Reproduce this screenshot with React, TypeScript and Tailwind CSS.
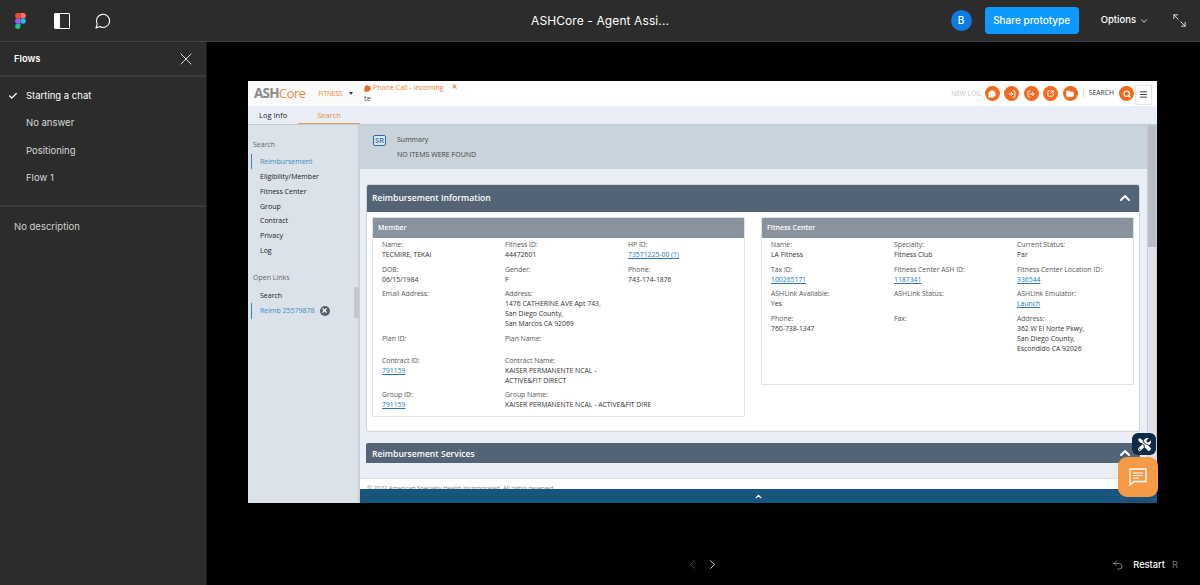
import { X, Check, ChevronDown, ChevronUp, ChevronLeft, ChevronRight, Search, Menu, Undo2, MessageCircle, LogIn, LogOut, SquareArrowOutUpRight, Folder, Maximize2 } from 'lucide-react';
import { FaTools } from 'react-icons/fa';

const flows = ['Starting a chat', 'No answer', 'Positioning', 'Flow 1'];
const searchLinks = ['Eligibility/Member', 'Fitness Center', 'Group', 'Contract', 'Privacy', 'Log'];

type Field = { label: string; lines?: string[]; link?: string };

const memberRows: Field[][] = [
  [
    { label: 'Name:', lines: ['TECMIRE, TEKAI'] },
    { label: 'Fitness ID:', lines: ['44472601'] },
    { label: 'HP ID:', link: '73571225-00 (1)' },
  ],
  [
    { label: 'DOB:', lines: ['06/15/1984'] },
    { label: 'Gender:', lines: ['F'] },
    { label: 'Phone:', lines: ['743-174-1876'] },
  ],
  [
    { label: 'Email Address:' },
    { label: 'Address:', lines: ['1476 CATHERINE AVE Apt 743,', 'San Diego County,', 'San Marcos CA 92069'] },
    { label: '' },
  ],
  [{ label: 'Plan ID:' }, { label: 'Plan Name:' }, { label: '' }],
  [
    { label: 'Contract ID:', link: '791159' },
    { label: 'Contract Name:', lines: ['KAISER PERMANENTE NCAL -', 'ACTIVE&FIT DIRECT'] },
    { label: '' },
  ],
  [
    { label: 'Group ID:', link: '791159' },
    { label: 'Group Name:', lines: ['KAISER PERMANENTE NCAL - ACTIVE&FIT DIRE'] },
    { label: '' },
  ],
];

const centerRows: Field[][] = [
  [
    { label: 'Name:', lines: ['LA Fitness'] },
    { label: 'Specialty:', lines: ['Fitness Club'] },
    { label: 'Current Status:', lines: ['Par'] },
  ],
  [
    { label: 'Tax ID:', link: '100265171' },
    { label: 'Fitness Center ASH ID:', link: '1187341' },
    { label: 'Fitness Center Location ID:', link: '336544' },
  ],
  [
    { label: 'ASHLink Available:', lines: ['Yes'] },
    { label: 'ASHLink Status:' },
    { label: 'ASHLink Emulator:', link: 'Launch' },
  ],
  [
    { label: 'Phone:', lines: ['760-738-1347'] },
    { label: 'Fax:' },
    { label: 'Address:', lines: ['362 W El Norte Pkwy,', 'San Diego County,', 'Escondido CA 92026'] },
  ],
];

function FigmaLogo() {
  return (
    <svg width="11" height="16" viewBox="0 0 38 57" className="shrink-0">
      <path d="M19 28.5a9.5 9.5 0 1 1 19 0 9.5 9.5 0 0 1-19 0z" fill="#1abcfe" />
      <path d="M0 47.5A9.5 9.5 0 0 1 9.5 38H19v9.5a9.5 9.5 0 1 1-19 0z" fill="#0acf83" />
      <path d="M19 0v19h9.5a9.5 9.5 0 1 0 0-19H19z" fill="#ff7262" />
      <path d="M0 9.5A9.5 9.5 0 0 0 9.5 19H19V0H9.5A9.5 9.5 0 0 0 0 9.5z" fill="#f24e1e" />
      <path d="M0 28.5A9.5 9.5 0 0 0 9.5 38H19V19H9.5A9.5 9.5 0 0 0 0 28.5z" fill="#a259ff" />
    </svg>
  );
}

function RoundAction({ children }: { children: React.ReactNode }) {
  return (
    <span className="w-[15px] h-[15px] rounded-full bg-[#f26a1e] flex items-center justify-center text-white shrink-0">
      {children}
    </span>
  );
}

function InfoGrid({ rows, tightRow }: { rows: Field[][]; tightRow?: number }) {
  return (
    <div className="pl-[9px] pt-[2px] text-[6.85px]">
      {rows.map((row, i) => (
        <div key={i} className={`grid grid-cols-[123px_123px_1fr] ${i === tightRow ? 'mb-[2px]' : 'mb-[4.6px]'}`}>
          {row.map((f, j) => (
            <div key={j} className="min-h-5 leading-[10px]">
              <div className="text-[#555]">{f.label || '\u00a0'}</div>
              {f.link && <div className="text-[#2a7ab8] underline">{f.link}</div>}
              {f.lines?.map((l) => <div key={l} className="text-[#333] whitespace-nowrap">{l}</div>)}
            </div>
          ))}
        </div>
      ))}
    </div>
  );
}

function SubPanel({ title, rows, className, tightRow }: { title: string; rows: Field[][]; className: string; tightRow?: number }) {
  return (
    <div className={`w-[373px] bg-white border border-[#dfe3e8] rounded-[1px] ${className}`}>
      <div className="h-5 bg-[#8a929e] text-white font-semibold text-[7px] leading-5 px-[5px]">{title}</div>
      <InfoGrid rows={rows} tightRow={tightRow} />
    </div>
  );
}

export default function App() {
  return (
    <div className="w-[1200px] h-[585px] bg-black overflow-hidden flex flex-col font-['Inter',sans-serif] text-white">
      <header className="h-[42px] shrink-0 bg-[#2c2c2c] border-b border-[#444] flex items-center relative">
        <div className="pl-[15px] flex items-center">
          <FigmaLogo />
          <span className="ml-[28px] w-4 h-4 border-[1.5px] border-white rounded-[1px] flex">
            <span className="w-[5px] bg-white" />
          </span>
          <svg width="16" height="16" viewBox="0 0 16 16" fill="none" stroke="white" strokeWidth="1.1" className="ml-[25px]">
            <path d="M1 15l1.2-4.1A6.6 6.6 0 1 1 4.8 13.6L1 15z" strokeLinejoin="round" />
          </svg>
        </div>
        <div className="absolute left-0 right-0 text-center text-[12px] tracking-[0.1px]">ASHCore - Agent Assi...</div>
        <div className="ml-auto flex items-center">
          <span className="w-[21px] h-[21px] rounded-full bg-[#0c7ce0] text-[10px] font-medium flex items-center justify-center">B</span>
          <button className="ml-[13px] w-[94px] h-[27px] rounded-[4px] bg-[#0d99ff] text-[10px] font-medium">Share prototype</button>
          <span className="ml-[22px] text-[9.5px] font-medium">Options</span>
          <ChevronDown size={10} className="ml-[3px]" />
          <Maximize2 size={15} strokeWidth={1.3} className="ml-[23px] mr-[13px] -scale-x-100" />
        </div>
      </header>

      <div className="flex-1 flex min-h-0">
        <aside className="w-[207px] shrink-0 bg-[#2c2c2c] border-r border-[#1a1a1a]">
          <div className="h-[35px] border-b-2 border-[#3b3b3b] flex items-center justify-between pl-[14px] pr-[10px]">
            <span className="text-[9.3px] font-semibold">Flows</span>
            <X size={20} strokeWidth={1} />
          </div>
          <div className="pt-[5px] pb-[13px] border-b-2 border-[#3b3b3b]">
            {flows.map((f, i) => (
              <div key={f} className={`h-[27.5px] flex items-center pl-[26px] text-[9.5px] relative ${i === 0 ? 'text-white' : 'text-[#d8d8d8]'}`}>
                {i === 0 && <Check size={10} strokeWidth={3} className="absolute left-[8px]" />}
                {f}
              </div>
            ))}
          </div>
          <div className="pl-[14px] pt-[13px] text-[9.5px] text-[#cfcfcf]">No description</div>
        </aside>

        <main className="flex-1 flex flex-col min-w-0 pt-[39px] pl-[41px]">
          <div className="w-[909px] h-[422px] shrink-0 relative">
            <div className="w-full h-full overflow-hidden flex flex-col bg-[#eaeef6] font-['Open_Sans',sans-serif] text-[7px] text-[#333]">
              <div className="h-[25px] shrink-0 bg-white flex">
                <div className="w-[114px] flex items-center pl-[6px] bg-[#fafafa]">
                  <span className="text-[13.5px] font-bold text-[#8b8b8b] tracking-[-0.8px] leading-none">ASH</span>
                  <span className="text-[13.5px] text-[#ee8d44] tracking-[-0.8px] leading-none">Core</span>
                  <span className="ml-[13px] text-[6.5px] text-[#ee7d2c]">FITNESS</span>
                  <span className="ml-[6px] border-x-[2.5px] border-x-transparent border-t-[3px] border-t-[#444]" />
                </div>
                <div className="w-[98px] pl-[2px] pt-[2px] relative leading-[10px]">
                  <div className="flex items-center text-[#ee7d2c] text-[7px]">
                    <MessageCircle size={7} fill="#ee6a1e" stroke="#ee6a1e" className="mr-[2px]" />
                    Phone Call - Incoming
                  </div>
                  <div className="text-[#444] text-[7.5px]">te</div>
                  <X size={7} strokeWidth={3.5} className="absolute right-[2px] top-[2px] text-[#ee6a1e]" />
                </div>
                <div className="flex-1 flex items-center justify-end pr-[5px]">
                  <span className="text-[#c4c4c4] text-[6.5px] mr-[4px]">NEW LOG</span>
                  <div className="flex items-center gap-[4.5px]">
                    <RoundAction><MessageCircle size={8} fill="white" /></RoundAction>
                    <RoundAction><LogIn size={8} strokeWidth={3} /></RoundAction>
                    <RoundAction><LogOut size={8} strokeWidth={3} /></RoundAction>
                    <RoundAction><SquareArrowOutUpRight size={7} strokeWidth={3} /></RoundAction>
                    <RoundAction><Folder size={8} fill="white" /></RoundAction>
                  </div>
                  <span className="w-px h-[9px] bg-[#ddd] mx-[5px]" />
                  <span className="text-[#333] text-[6.8px] mr-[5px]">SEARCH</span>
                  <RoundAction><Search size={8} strokeWidth={3.5} /></RoundAction>
                  <span className="ml-[1px] w-[17px] h-[20px] mt-[2px] bg-white border border-[#e4e4e4] flex items-center justify-center">
                    <Menu size={9} strokeWidth={2.5} className="text-[#333]" />
                  </span>
                </div>
              </div>

              <div className="h-[18px] shrink-0 flex bg-[#eaeef6] text-[7.5px]">
                <div className="w-[50px] pl-[11px] pt-[2px] leading-[15px] text-[#222]">Log Info</div>
                <div className="w-[62px] pt-[2px] text-center leading-[15px] text-[#ee8d44] border-b-[1.5px] border-[#ee9a5c]">Search</div>
              </div>

              <div className="flex-1 flex min-h-0 border-t border-[#c3ccd4]">
                <nav className="w-[112px] shrink-0 bg-[#dbe2e9] border-r-2 border-[#c8d0d8] relative pt-[15px]">
                  <div className="pl-[5px] text-[#666] leading-[10px]">Search</div>
                  <div className="mt-[4px] ml-[3px] pl-[8px] border-l-[1.5px] border-[#3b82b5] leading-[15px] text-[#3f8bc2]">Reimbursement</div>
                  <div className="pl-[12px] pt-[1px]">
                    {searchLinks.map((s) => (
                      <div key={s} className="leading-[14.8px] text-[#222]">{s}</div>
                    ))}
                  </div>
                  <div className="pl-[5px] mt-[14px] text-[#666] leading-[10px]">Open Links</div>
                  <div className="pl-[12px] mt-[6px] leading-[14px] text-[#222]">Search</div>
                  <div className="ml-[3px] pl-[8px] border-l-[1.5px] border-[#3b82b5] leading-[16px] text-[#3f8bc2] flex items-center">
                    Reimb 25579878
                    <span className="ml-[5px] w-[10px] h-[10px] rounded-full bg-[#55606b] flex items-center justify-center text-white">
                      <X size={7} strokeWidth={4} />
                    </span>
                  </div>
                  <span className="absolute -right-[1px] top-[162px] w-[5px] h-[31px] rounded-[2px] bg-[#c0c7ce]" />
                </nav>

                <div className="flex-1 flex min-w-0 overflow-hidden">
                  <div className="flex-1 min-w-0 flex flex-col">
                    <div className="h-[44px] shrink-0 bg-[#c9d3db] flex pl-[13px] pt-[9px]">
                      <span className="mt-[1px] w-[13px] h-[11px] border border-[#2a6c9c] rounded-[2px] bg-[#dbe7f0] text-[#2a6c9c] text-[7.5px] leading-[9px] font-semibold text-center">SR</span>
                      <div className="ml-[11px] leading-[14.5px] text-[#444]">
                        <div className="-mt-[1px]">Summary</div>
                        <div>NO ITEMS WERE FOUND</div>
                      </div>
                    </div>

                    <div className="mt-[15px] ml-[6px] mr-[7px] shrink-0 h-[248px] bg-white border border-[#cfd4da] rounded-[2px]">
                      <div className="h-[27px] bg-[#536476] rounded-t-[2px] flex items-center justify-between pl-[5px] pr-[6px] pb-[1px] text-white text-[8.6px] font-semibold">
                        Reimbursement Information
                        <ChevronUp size={16} strokeWidth={3} />
                      </div>
                      <div className="flex justify-between px-[5px] pt-[5px]">
                        <SubPanel title="Member" rows={memberRows} tightRow={3} className="h-[200px]" />
                        <SubPanel title="Fitness Center" rows={centerRows} className="h-[168px]" />
                      </div>
                    </div>

                    <div className="mt-[11px] ml-[6px] mr-[7px] shrink-0 h-[20px] bg-[#536476] rounded-t-[2px] flex items-center justify-between pl-[6px] pr-[7px] text-white text-[8.6px] font-semibold">
                      <span className="pt-[3px]">Reimbursement Services</span>
                      <ChevronUp size={16} strokeWidth={3} />
                    </div>
                    <div className="h-[15px] shrink-0" />
                    <div className="flex-1 bg-white border-t border-[#dde1e6] text-[6px] leading-[18px] text-[#777] pl-[7px] overflow-hidden">
                      © 2022 American Specialty Health Incorporated. All rights reserved.
                    </div>
                  </div>
                  <div className="w-[10px] shrink-0 bg-[#dfe3e8] border-x border-[#c9ced4] relative">
                    <span className="absolute inset-x-0 top-0 h-[122px] bg-[#b9bec4]" />
                  </div>
                </div>
              </div>
            </div>

            {/* footer bar sits on top of the page content */}
            <div className="absolute left-[112px] right-0 bottom-0 h-[14px] bg-[#19547c] flex items-center justify-center">
              <ChevronUp size={9} strokeWidth={3.5} className="text-white" />
            </div>
            <div className="absolute left-[884px] top-[352px] w-[24px] h-[22px] rounded-[6px] bg-[#0f2a47] flex items-center justify-center text-white">
              <FaTools size={13} />
            </div>
            <div className="absolute left-[870px] top-[376px] w-[40px] h-[40px] rounded-[9px] bg-[#f79a45] flex items-center justify-center text-white">
              <svg width="18" height="18" viewBox="0 0 18 18" fill="none" stroke="white" strokeWidth="1.3">
                <path d="M1 1h16v12.5H5L1 17V1z" strokeLinejoin="round" />
                <path d="M4 5h10M4 7.5h10M4 10h6" strokeWidth="1.2" />
              </svg>
            </div>
          </div>

          <div className="flex-1 flex items-center pt-[41px]">
            <div className="ml-[437px] flex items-center gap-[5px]">
              <ChevronLeft size={15} strokeWidth={1.2} className="text-[#666]" />
              <ChevronRight size={15} strokeWidth={1.4} className="text-white" />
            </div>
            <div className="ml-auto mr-[22px] flex items-center text-[9.3px]">
              <Undo2 size={12} strokeWidth={1.2} className="text-[#ccc]" />
              <span className="ml-[9px] font-medium">Restart</span>
              <span className="ml-[7px] text-[#777]">R</span>
            </div>
          </div>
        </main>
      </div>
    </div>
  );
}
